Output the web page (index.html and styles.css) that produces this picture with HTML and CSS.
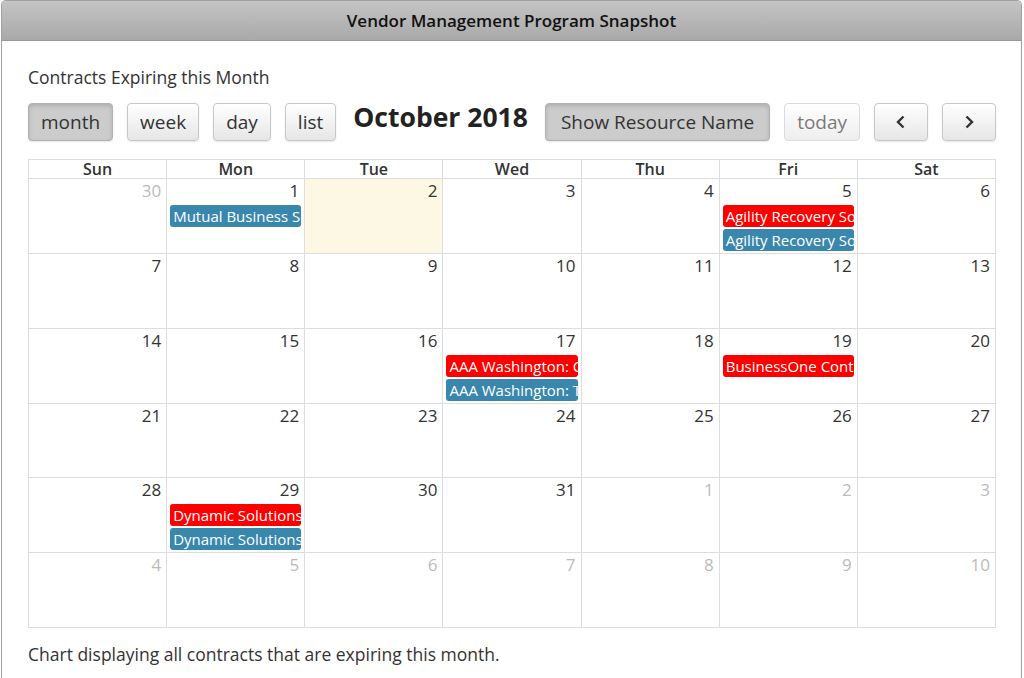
FILE: index.html
```html
<!DOCTYPE html>
<html lang="en">

<head>
    <meta charset="UTF-8">
    <title>Vendor Management Program Snapshot</title>
    <link rel="stylesheet" href="styles.css">
</head>

<body>
<div class="panel">
    <div class="panel-heading">Vendor Management Program Snapshot</div>
    <div class="panel-body">
        <p class="caption">Contracts Expiring this Month</p>

        <div class="toolbar">
            <div class="btn-group">
                <button class="btn active">month</button>
                <button class="btn">week</button>
                <button class="btn">day</button>
                <button class="btn">list</button>
            </div>
            <h2 class="cal-title">October 2018</h2>
            <button class="btn active resource-btn">Show Resource Name</button>
            <button class="btn disabled">today</button>
            <div class="btn-group nav">
                <button class="btn arrow">
                    <svg width="16" height="16" viewBox="0 0 16 16"><path d="M10.5 2.5 L5 8 L10.5 13.5" fill="none" stroke="#333" stroke-width="2.4"/></svg>
                </button>
                <button class="btn arrow">
                    <svg width="16" height="16" viewBox="0 0 16 16"><path d="M5.5 2.5 L11 8 L5.5 13.5" fill="none" stroke="#333" stroke-width="2.4"/></svg>
                </button>
            </div>
        </div>

        <table class="calendar">
            <thead>
            <tr>
                <th>Sun</th><th>Mon</th><th>Tue</th><th>Wed</th><th>Thu</th><th>Fri</th><th>Sat</th>
            </tr>
            </thead>
            <tbody id="cal-body"></tbody>
        </table>

        <p class="caption footer-note">Chart displaying all contracts that are expiring this month.</p>
    </div>
</div>

<script>
    // events keyed by day of October
    const events = {
        1: [['blue', 'Mutual Business Services']],
        5: [['red', 'Agility Recovery Solutions'], ['blue', 'Agility Recovery Solutions']],
        17: [['red', 'AAA Washington: Contract'], ['blue', 'AAA Washington: Travel']],
        19: [['red', 'BusinessOne Contract']],
        29: [['red', 'Dynamic Solutions'], ['blue', 'Dynamic Solutions']]
    };

    const tbody = document.getElementById('cal-body');
    // grid starts Sunday Sep 30
    let day = new Date(2018, 8, 30);
    for (let w = 0; w < 6; w++) {
        const tr = document.createElement('tr');
        for (let d = 0; d < 7; d++) {
            const td = document.createElement('td');
            const inMonth = day.getMonth() === 9;
            if (!inMonth) td.className = 'other';
            if (inMonth && day.getDate() === 2) td.className = 'today';
            let html = `<div class="day-num">${day.getDate()}</div>`;
            if (inMonth && events[day.getDate()]) {
                events[day.getDate()].forEach(ev => {
                    html += `<div class="event ${ev[0]}">${ev[1]}</div>`;
                });
            }
            td.innerHTML = html;
            tr.appendChild(td);
            day.setDate(day.getDate() + 1);
        }
        tbody.appendChild(tr);
    }
</script>
</body>

</html>
```

FILE: styles.css
```css
body {
    margin: 0;
    font-family: "Open Sans", "DejaVu Sans", sans-serif;
    color: #333;
    background-color: #fff;
}

.panel {
    margin: 0 2px 0 1px;
    height: 678px;
    box-sizing: border-box;
    border: 1px solid #a0a0a0;
    border-bottom: none;
    border-radius: 5px 5px 0 0;
    overflow: hidden;
}

.panel-heading {
    height: 39px;
    line-height: 39px;
    text-align: center;
    font-size: 17px;
    font-weight: 600;
    color: #111;
    background: linear-gradient(#c4c4c4, #a9a9a9);
    border-bottom: 1px solid #999;
}

.panel-body {
    padding: 0 25px 0 26px;
}

.caption {
    margin: 24px 0 0;
    font-size: 17.5px;
    line-height: 24px;
}

.toolbar {
    display: flex;
    align-items: center;
    margin-top: 14px;
    height: 38px;
}

.btn-group {
    display: flex;
    gap: 14px;
}

.btn {
    height: 38px;
    padding: 0 12px;
    font-family: inherit;
    font-size: 19px;
    color: #333;
    border: 1px solid #c8c8c8;
    border-radius: 4px;
    background: linear-gradient(#fff, #e6e6e6);
    box-shadow: inset 0 1px 0 rgba(255, 255, 255, 0.2), 0 1px 2px rgba(0, 0, 0, 0.1);
    cursor: pointer;
}

.btn.active {
    background: #ccc;
    border-color: #b3b3b3;
    box-shadow: inset 0 2px 4px rgba(0, 0, 0, 0.15), 0 1px 2px rgba(0, 0, 0, 0.1);
}

.btn.disabled {
    opacity: 0.65;
    box-shadow: none;
    cursor: default;
}

.cal-title {
    margin: 0 17px;
    font-size: 26.5px;
    font-weight: 700;
    color: #222;
    line-height: 30px;
    position: relative;
    top: -5px;
}

.resource-btn {
    padding: 0 15px;
    margin-right: 14px;
}

.nav {
    margin-left: auto;
    gap: 14px;
}

.btn.arrow {
    width: 54px;
    display: flex;
    align-items: center;
    justify-content: center;
}

.calendar {
    width: 100%;
    margin-top: 18px;
    border-collapse: collapse;
    table-layout: fixed;
}

.calendar th {
    height: 18px;
    padding: 0;
    font-size: 16px;
    font-weight: 600;
    line-height: 18px;
    border: 1px solid #ddd;
}

.calendar td {
    height: 73.5px;
    padding: 0;
    vertical-align: top;
    border: 1px solid #ddd;
}

.calendar td.today {
    background-color: #fcf8e3;
}

.day-num {
    text-align: right;
    padding: 1px 5px 0;
    font-size: 17px;
    line-height: 22px;
}

.calendar td.other .day-num {
    color: #bbb;
}

.event {
    height: 22px;
    margin: 3px 3px 2px 3px;
    padding: 0 3px;
    border-radius: 3px;
    font-size: 15px;
    line-height: 22px;
    color: #fff;
    white-space: nowrap;
    overflow: hidden;
}

.event + .event {
    margin-top: 2px;
}

.event.red {
    background-color: #f00;
}

.event.blue {
    background-color: #3a87ad;
}

.footer-note {
    margin-top: 14px;
}
```
